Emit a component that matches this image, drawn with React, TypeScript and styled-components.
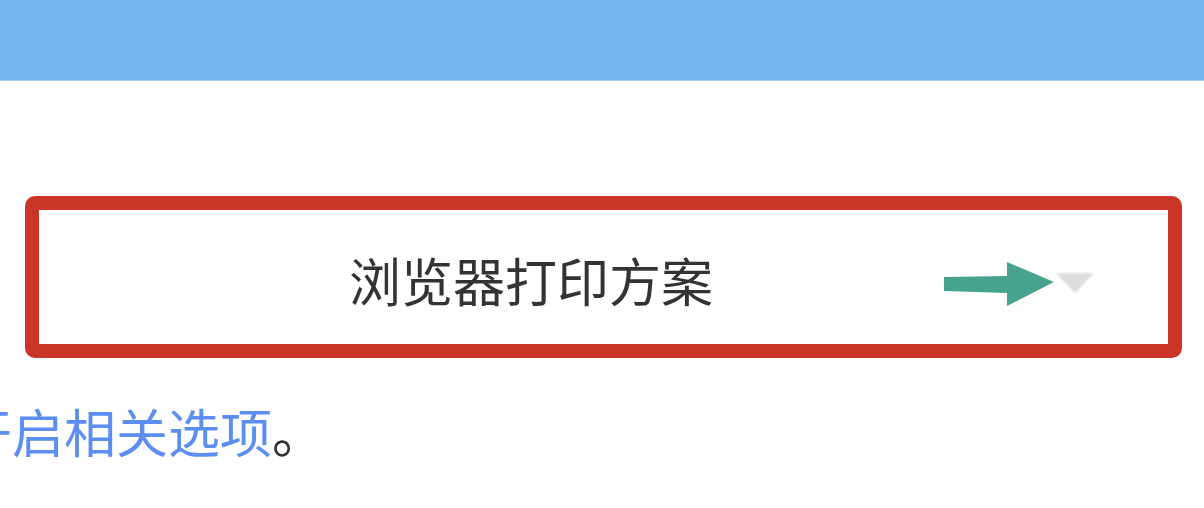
import React from "react";
import styled, { createGlobalStyle } from "styled-components";

const GlobalStyle = createGlobalStyle`
  html, body {
    margin: 0;
    padding: 0;
    background: #ffffff;
    overflow: hidden;
  }
  body {
    font-family: "Noto Sans CJK SC", "Noto Sans", sans-serif;
  }
`;

const Page = styled.div`
  width: 1204px;
  height: 508px;
  display: flex;
  flex-direction: column;
  background: #ffffff;
`;

const TopBar = styled.div`
  height: 80px;
  flex: none;
  background: #78b4f1;
  border-bottom: 1px solid #a4cdf6;
`;

const Content = styled.div`
  display: flex;
  flex-direction: column;
  padding: 115px 22px 0 25px;
`;

const SelectBox = styled.div`
  position: relative;
  box-sizing: border-box;
  height: 162px;
  border: 14px solid #c93526;
  border-radius: 10px;
  display: flex;
  align-items: center;
  padding: 0 74px 0 310px;
`;

const SelectLabel = styled.span`
  font-size: 52px;
  line-height: 1;
  color: #333333;
  letter-spacing: 0;
  margin-top: 5px;
`;

const Spacer = styled.div`
  flex: 1;
`;

const Caret = styled.div`
  width: 0;
  height: 0;
  border-left: 19px solid transparent;
  border-right: 19px solid transparent;
  border-top: 20px solid #dcdcdc;
  filter: blur(1.2px);
  margin-left: 1px;
  margin-top: 12px;
`;

const Hint = styled.p`
  margin: 42px 0 0 -65px;
  font-size: 52px;
  line-height: 1.2;
  color: #5b8ef0;
  white-space: nowrap;
`;

const Stop = styled.span`
  color: #333333;
`;

const Pointer = () => (
  <svg width="111" height="46" viewBox="0 0 111 46" style={{ flex: "none", marginTop: 16 }}>
    <path d="M0 15 L63 14 L63 0 L110 20 L63 44 L63 31 L0 29 Z" fill="#48a38e" />
  </svg>
);

export default function App() {
  return (
    <Page>
      <GlobalStyle />
      <TopBar />
      <Content>
        <SelectBox>
          <SelectLabel>浏览器打印方案</SelectLabel>
          <Spacer />
          <Pointer />
          <Caret />
        </SelectBox>
        <Hint>
          开启相关选项<Stop>。</Stop>
        </Hint>
      </Content>
    </Page>
  );
}
